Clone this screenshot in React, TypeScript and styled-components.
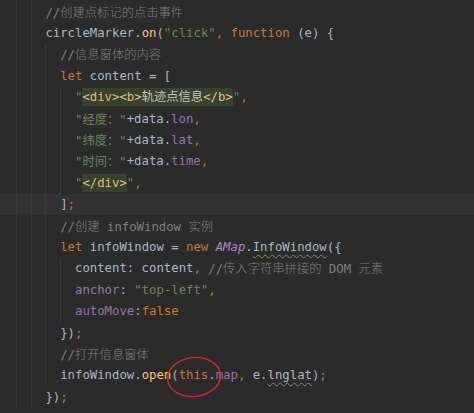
import React from "react";
import styled, { createGlobalStyle, css } from "styled-components";

const Global = createGlobalStyle`
  html, body { margin: 0; padding: 0; background: #2b2b2b; }
  body { width: 474px; height: 413px; overflow: hidden; }
`;

type Kind = "plain" | "kw" | "str" | "fn" | "prop" | "cmt" | "tag" | "inj" | "cls" | "warn" | "punc";
type Tok = [Kind, string] | ["injBlock", Tok[]];

const colors: Record<string, string> = {
  plain: "#a9b7c6",
  kw: "#cc7832",
  str: "#6a8759",
  fn: "#ffc66d",
  prop: "#9876aa",
  cmt: "#808080",
  tag: "#e8bf6a",
  inj: "#c9c6a8",
  cls: "#b484c9",
  warn: "#a9b7c6",
  punc: "#cc7832",
};

const Editor = styled.div`
  position: relative;
  width: 474px;
  height: 413px;
  padding-top: 1px;
  padding-left: 1px;
  box-sizing: border-box;
  display: flex;
  flex-direction: column;
  font-family: "DejaVu Sans Mono", "Noto Sans CJK SC", monospace;
  font-size: 12.3px;
  color: #a9b7c6;
`;

const Line = styled.div<{ $current?: boolean }>`
  display: flex;
  align-items: center;
  height: 21.4px;
  white-space: pre;
  margin-left: -1px;
  padding-left: 1px;
  ${(p) =>
    p.$current &&
    css`
      background: #323232;
    `}
`;

const Indent = styled.span<{ $guide: boolean }>`
  display: inline-block;
  align-self: stretch;
  width: 14.81px;
  flex: none;
  box-sizing: border-box;
  border-left: 1px solid ${(p) => (p.$guide ? "#393939" : "transparent")};
  margin-left: 0;
`;

const Token = styled.span<{ $kind: Kind }>`
  color: ${(p) => colors[p.$kind]};
  ${(p) =>
    p.$kind === "cls" &&
    css`
      font-style: italic;
    `}
  ${(p) =>
    p.$kind === "warn" &&
    css`
      text-decoration-line: underline;
      text-decoration-style: wavy;
      text-decoration-color: #8c8a5e;
      text-decoration-thickness: 1px;
      text-underline-offset: 3px;
    `}
  ${(p) =>
    p.$kind === "cmt" &&
    css`
      font-weight: 300;
    `}
`;

const Injection = styled.span`
  background: #374131;
  line-height: 18px;
  display: inline-block;
`;

const Annotation = styled.svg`
  position: absolute;
  left: 164px;
  top: 354px;
  width: 60px;
  height: 46px;
  pointer-events: none;
`;

type LineDef = { indent: number; toks: Tok[]; current?: boolean };

const lines: LineDef[] = [
  { indent: 3, toks: [["cmt", "//创建点标记的点击事件"]] },
  {
    indent: 3,
    toks: [
      ["plain", "circleMarker."],
      ["fn", "on"],
      ["plain", "("],
      ["str", "\"click\""],
      ["punc", ", "],
      ["kw", "function "],
      ["plain", "(e) {"],
    ],
  },
  { indent: 4, toks: [["cmt", "//信息窗体的内容"]] },
  { indent: 4, toks: [["kw", "let "], ["plain", "content = ["]] },
  {
    indent: 5,
    toks: [
      ["str", "\""],
      ["injBlock", [["tag", "<div><b>"], ["inj", "轨迹点信息"], ["tag", "</b>"]]],
      ["str", "\""],
      ["punc", ","],
    ],
  },
  { indent: 5, toks: [["str", "\"经度：\""], ["plain", "+data."], ["prop", "lon"], ["punc", ","]] },
  { indent: 5, toks: [["str", "\"纬度：\""], ["plain", "+data."], ["prop", "lat"], ["punc", ","]] },
  { indent: 5, toks: [["str", "\"时间：\""], ["plain", "+data."], ["prop", "time"], ["punc", ","]] },
  {
    indent: 5,
    toks: [["str", "\""], ["injBlock", [["tag", "</div>"]]], ["str", "\""], ["punc", ","]],
  },
  { indent: 4, current: true, toks: [["plain", "]"], ["punc", ";"]] },
  { indent: 4, toks: [["cmt", "//创建 infoWindow 实例"]] },
  {
    indent: 4,
    toks: [
      ["kw", "let "],
      ["plain", "infoWindow = "],
      ["kw", "new "],
      ["cls", "AMap"],
      ["plain", "."],
      ["warn", "InfoWindow"],
      ["plain", "({"],
    ],
  },
  {
    indent: 5,
    toks: [
      ["plain", "content: content"],
      ["punc", ", "],
      ["cmt", "//传入字符串拼接的 DOM 元素"],
    ],
  },
  { indent: 5, toks: [["prop", "anchor"], ["plain", ": "], ["str", "\"top-left\""], ["punc", ","]] },
  { indent: 5, toks: [["prop", "autoMove"], ["plain", ":"], ["kw", "false"]] },
  { indent: 4, toks: [["plain", "})"], ["punc", ";"]] },
  { indent: 4, toks: [["cmt", "//打开信息窗体"]] },
  {
    indent: 4,
    toks: [
      ["plain", "infoWindow."],
      ["fn", "open"],
      ["plain", "("],
      ["kw", "this"],
      ["plain", "."],
      ["prop", "map"],
      ["punc", ", "],
      ["plain", "e."],
      ["warn", "lnglat"],
      ["plain", ")"],
      ["punc", ";"],
    ],
  },
  { indent: 3, toks: [["plain", "})"], ["punc", ";"]] },
];

function renderToks(toks: Tok[]): React.ReactNode[] {
  return toks.map((t, i) => {
    if (t[0] === "injBlock") {
      return <Injection key={i}>{renderToks(t[1] as Tok[])}</Injection>;
    }
    return (
      <Token key={i} $kind={t[0] as Kind}>
        {t[1] as string}
      </Token>
    );
  });
}

export default function App() {
  return (
    <>
      <Global />
      <Editor>
        {lines.map((l, i) => (
          <Line key={i} $current={l.current}>
            {Array.from({ length: l.indent }).map((_, k) => (
              <Indent key={k} $guide={k > 0} />
            ))}
            {renderToks(l.toks)}
          </Line>
        ))}
        <Annotation viewBox="0 0 60 46">
          <ellipse
            cx="30"
            cy="23"
            rx="26.5"
            ry="19.5"
            transform="rotate(-6 30 23)"
            fill="none"
            stroke="#d8262a"
            strokeWidth="1.4"
          />
        </Annotation>
      </Editor>
    </>
  );
}
